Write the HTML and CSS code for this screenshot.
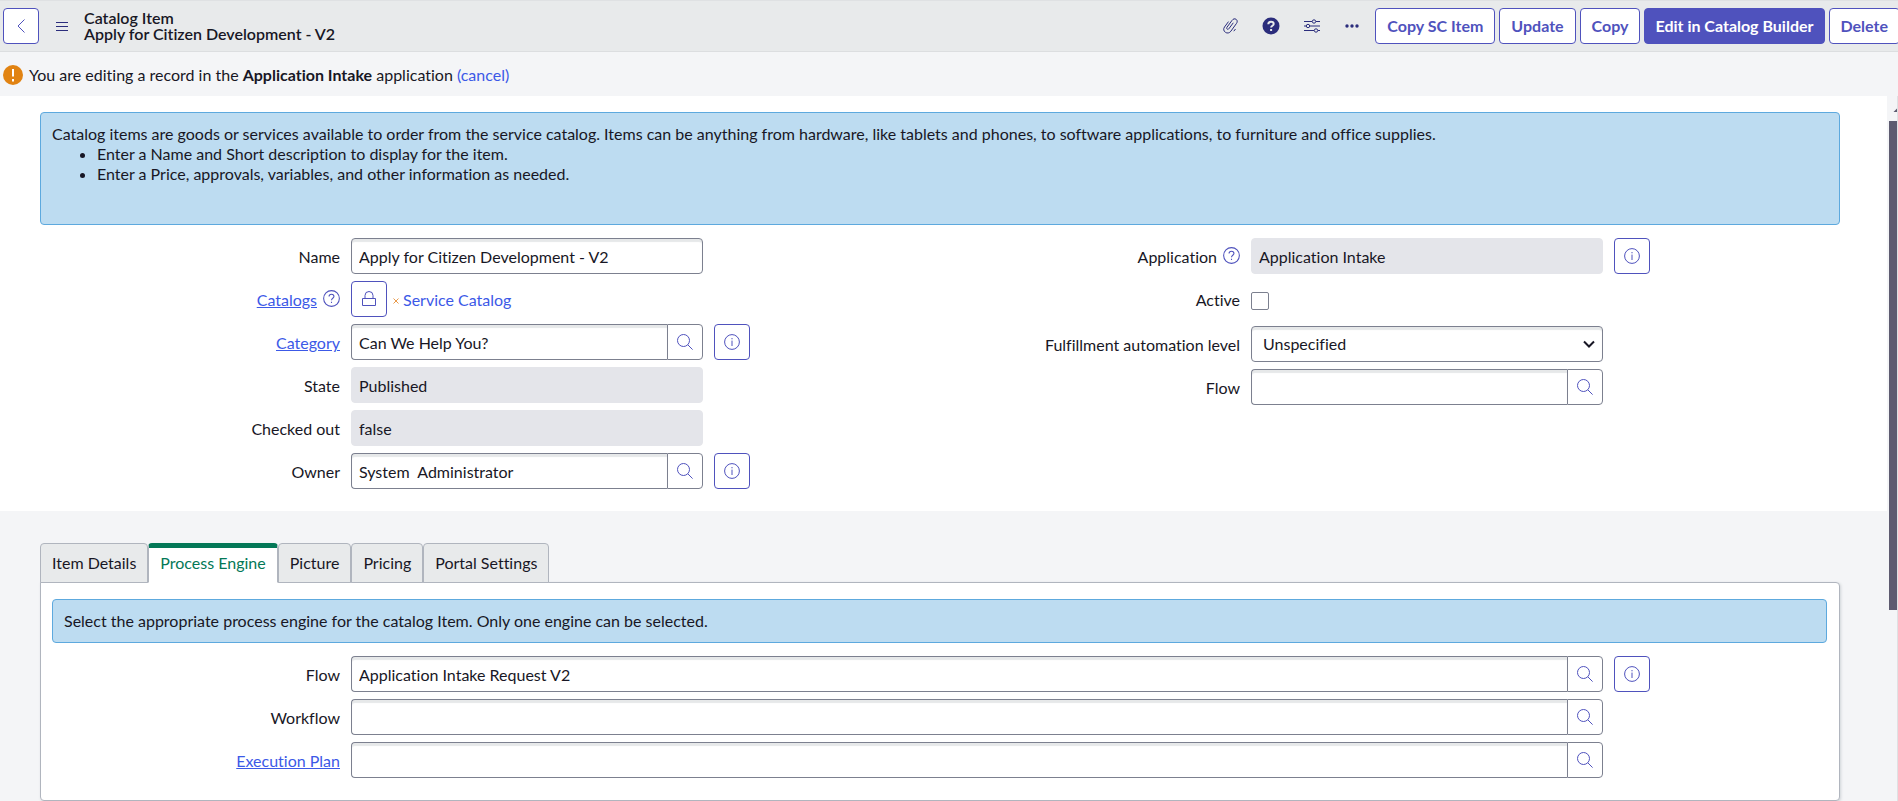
FILE: index.html
```html
<!DOCTYPE html>
<html lang="en">
<head>
<meta charset="utf-8">
<title>Apply for Citizen Development - V2 | Catalog Item</title>
<link rel="stylesheet" href="styles.css">
</head>
<body>
<svg class="sprite" aria-hidden="true">
  <symbol id="i-search" viewBox="0 0 16 16"><circle cx="6.5" cy="6.5" r="6"/><path d="M10.8 10.8 15.6 15.6"/></symbol>
  <symbol id="i-info" viewBox="0 0 16 16"><circle cx="8" cy="8" r="7.4"/><path d="M8 6.6V12M8 4v1.3"/></symbol>
  <symbol id="i-help" viewBox="0 0 16 16"><circle cx="8" cy="8" r="7.4"/><path d="M5.7 6.2C5.7 4.8 6.7 4 8 4s2.3.8 2.3 2.1C10.3 7.7 8 7.8 8 9.6M8 11v1.2"/></symbol>
</svg>
<header class="header">
  <button class="btn btn-icon" aria-label="Back"><svg class="icon" viewBox="0 0 16 16"><path d="M11.5 1.5 5 8 11.5 14.5"/></svg></button>
  <button class="menu" aria-label="Menu"><svg class="icon-menu" viewBox="0 0 12 10"><path d="M0 1.5h12M0 5.5h12M0 9.5h12"/></svg></button>
  <h1 class="title">Catalog Item<br>Apply for Citizen Development - V2</h1>
  <div class="tools">
    <button class="tool" aria-label="Attachments"><svg class="icon" viewBox="0 0 16 16"><path d="M11.3 4.8 6.9 10.7c-.5.7-1.3.8-1.8.4s-.6-1.2-.1-1.9l5.1-6.9C11.2.8 12.8.4 14.1 1.3s1.5 2.6.4 4.1L8.9 13.2c-1.4 1.9-3.7 2.4-5.5 1.1S1.1 10.9 2.5 9L6.5 3.6M13.5 11 11.8 13.2"/></svg></button>
    <button class="tool" aria-label="Help"><svg class="icon-help" viewBox="0 0 18 18"><circle class="disc" cx="9" cy="9" r="8.5"/><path class="mark" d="M6.3 7.2C6.3 5.6 7.4 4.7 9 4.7s2.7.9 2.7 2.3c0 1.8-2.6 1.8-2.6 3.6M9.1 12.1v2"/></svg></button>
    <button class="tool" aria-label="Settings"><svg class="icon" viewBox="0 0 16 16"><path d="M0 3.5h8M12 3.5h4M0 8h2M6 8h10M0 12.5h10M14 12.5h2"/><circle cx="10" cy="3.5" r="1.7"/><circle cx="4" cy="8" r="1.7"/><circle cx="12" cy="12.5" r="1.7"/></svg></button>
    <button class="tool" aria-label="More options"><svg class="icon dots" viewBox="0 0 16 16"><circle cx="3" cy="8" r="1.7"/><circle cx="8" cy="8" r="1.7"/><circle cx="13" cy="8" r="1.7"/></svg></button>
  </div>
  <div class="actions">
    <button class="btn">Copy SC Item</button>
    <button class="btn">Update</button>
    <button class="btn">Copy</button>
    <button class="btn btn-primary">Edit in Catalog Builder</button>
    <button class="btn">Delete</button>
  </div>
</header>
<div class="notice">
  <svg class="alert" viewBox="0 0 20 20"><circle cx="10" cy="10" r="10"/><path d="M10 4v7.5M10 14v2.4"/></svg>
  <p>You are editing a record in the <strong>Application Intake</strong> application <a href="#">(cancel)</a></p>
</div>
<div class="body">
<main class="content">
  <section class="record">
    <div class="callout callout-tall">
      Catalog items are goods or services available to order from the service catalog. Items can be anything from hardware, like tablets and phones, to software applications, to furniture and office supplies.
      <ul>
        <li>Enter a Name and Short description to display for the item.</li>
        <li>Enter a Price, approvals, variables, and other information as needed.</li>
      </ul>
    </div>
    <div class="columns">
      <div class="column">
        <div class="row"><label class="label" for="name">Name</label><input class="field" id="name" value="Apply for Citizen Development - V2"></div>
        <div class="row"><span class="label"><a class="underlined" href="#">Catalogs</a><svg class="icon"><use href="#i-help"/></svg></span>
          <span class="catalogs"><button class="btn btn-icon" aria-label="Unlock Catalogs"><svg class="icon" viewBox="0 0 16 16"><path d="M1.5 7.5h13v7h-13zM4 7.5V4.5a4 4 0 0 1 8 0V7.5"/></svg></button><svg class="cross" viewBox="0 0 6 6"><path d="M.5.5l5 5M5.5.5l-5 5"/></svg><a href="#">Service Catalog</a></span></div>
        <div class="row"><label class="label" for="category"><a class="underlined" href="#">Category</a></label><span class="lookup"><input class="field" id="category" value="Can We Help You?"><button class="search" aria-label="Look up Category"><svg class="icon"><use href="#i-search"/></svg></button></span><button class="btn btn-icon" aria-label="Preview Category"><svg class="icon"><use href="#i-info"/></svg></button></div>
        <div class="row"><label class="label" for="state">State</label><input class="field readonly" id="state" value="Published" readonly></div>
        <div class="row"><label class="label" for="checked">Checked out</label><input class="field readonly" id="checked" value="false" readonly></div>
        <div class="row"><label class="label" for="owner">Owner</label><span class="lookup"><input class="field" id="owner" value="System  Administrator"><button class="search" aria-label="Look up Owner"><svg class="icon"><use href="#i-search"/></svg></button></span><button class="btn btn-icon" aria-label="Preview Owner"><svg class="icon"><use href="#i-info"/></svg></button></div>
      </div>
      <div class="column">
        <div class="row"><label class="label" for="app">Application<svg class="icon"><use href="#i-help"/></svg></label><input class="field readonly" id="app" value="Application Intake" readonly><button class="btn btn-icon" aria-label="Preview Application"><svg class="icon"><use href="#i-info"/></svg></button></div>
        <div class="row row-check"><label class="label" for="active">Active</label><input class="check" type="checkbox" id="active"></div>
        <div class="row"><label class="label" for="level">Fulfillment automation level</label><span class="select"><select class="field" id="level"><option>Unspecified</option></select><svg class="chevron" viewBox="0 0 12 8"><path d="M1 1.5 6 6.5 11 1.5"/></svg></span></div>
        <div class="row"><label class="label" for="flow">Flow</label><span class="lookup"><input class="field" id="flow"><button class="search" aria-label="Look up Flow"><svg class="icon"><use href="#i-search"/></svg></button></span></div>
      </div>
    </div>
  </section>
  <section class="sections">
    <div class="tabs" role="tablist">
      <button class="tab" role="tab">Item Details</button>
      <button class="tab tab-active" role="tab" aria-selected="true">Process Engine</button>
      <button class="tab" role="tab">Picture</button>
      <button class="tab" role="tab">Pricing</button>
      <button class="tab" role="tab">Portal Settings</button>
    </div>
    <div class="panel" role="tabpanel">
      <div class="callout">Select the appropriate process engine for the catalog Item. Only one engine can be selected.</div>
      <div class="wide">
        <div class="row"><label class="label" for="pflow">Flow</label><span class="lookup"><input class="field" id="pflow" value="Application Intake Request V2"><button class="search" aria-label="Look up process Flow"><svg class="icon"><use href="#i-search"/></svg></button></span><button class="btn btn-icon" aria-label="Preview Flow"><svg class="icon"><use href="#i-info"/></svg></button></div>
        <div class="row"><label class="label" for="workflow">Workflow</label><span class="lookup"><input class="field" id="workflow"><button class="search" aria-label="Look up Workflow"><svg class="icon"><use href="#i-search"/></svg></button></span></div>
        <div class="row"><label class="label" for="plan"><a class="underlined" href="#">Execution Plan</a></label><span class="lookup"><input class="field" id="plan"><button class="search" aria-label="Look up Execution Plan"><svg class="icon"><use href="#i-search"/></svg></button></span></div>
      </div>
    </div>
  </section>
</main>
<div class="scrollbar" aria-hidden="true"><svg class="up" viewBox="0 0 8 8"><path d="M8 1v7H1z"/></svg><div class="thumb"></div></div>
</div>
</body>
</html>
```
FILE: styles.css
```css
* { box-sizing: border-box; }
body {
  margin: 0;
  height: 100vh;
  overflow: hidden;
  display: flex;
  flex-direction: column;
  background: #f4f5f7;
  color: #181725;
  font: 16px/20px Lato, "Open Sans", sans-serif;
  font-variant-ligatures: none;
}
button, input, select { font: inherit; font-variant-ligatures: none; color: inherit; margin: 0; }
p, h1, ul { margin: 0; }
a { color: #3c59e7; text-decoration: none; }
.underlined { text-decoration: underline; }
.sprite { position: absolute; width: 0; height: 0; }
.icon { width: 16px; height: 16px; flex: none; fill: none; stroke: #4f52bd; }

.header {
  flex: none;
  display: flex;
  align-items: center;
  height: 52px;
  padding-left: 3px;
  background: #e8eaeb;
  border-top: 1px solid #dfe1e3;
  border-bottom: 1px solid #dcdee0;
}
.btn {
  flex: none;
  height: 36px;
  padding: 0 11px;
  border: 1px solid #4f52bd;
  border-radius: 4px;
  background: #fff;
  color: #4f52bd;
  font-weight: 700;
  white-space: nowrap;
}
.btn-primary { padding: 0 10px; background: #4f52bd; color: #fff; }
.btn-icon { width: 36px; padding: 0; display: flex; align-items: center; justify-content: center; }
.menu, .tool { padding: 0; border: 0; background: none; display: flex; }
.menu { margin: 0 16px 0 17px; }
.icon-menu { width: 12px; height: 10px; stroke: #2b2d7c; }
.title { font-size: 16px; line-height: 16px; font-weight: 600; white-space: nowrap; }
.tools { display: flex; align-items: center; gap: 24px; margin-left: auto; margin-right: 15px; }
.tools .icon { stroke: #2b2d7c; }
.tools .dots { fill: #2b2d7c; stroke: none; }
.icon-help { width: 18px; height: 18px; }
.disc { fill: #2b2d7c; }
.mark { fill: none; stroke: #e8eaeb; stroke-width: 2; }
.actions { display: flex; gap: 4px; margin-right: -2px; }

.notice { flex: none; display: flex; align-items: center; gap: 6px; height: 44px; padding: 2px 3px 0; }
.alert { width: 20px; height: 20px; fill: #e18312; }
.alert path { stroke: #fff; stroke-width: 2; }

.body { flex: 1; min-height: 0; display: flex; }
.content { flex: 1; min-width: 0; overflow: hidden; }
.record { background: #fff; padding: 16px 47px 22px 40px; }
.callout {
  padding: 11px;
  border: 1px solid #5da9de;
  border-radius: 4px;
  background: #bddcf1;
}
.callout-tall { min-height: 113px; }
.callout ul { padding-left: 45px; }
.columns { display: grid; grid-template-columns: 1fr 1fr; padding-top: 13px; }
.column, .wide { display: flex; flex-direction: column; gap: 7px; }
.row { display: flex; gap: 11px; min-height: 36px; }
.column .row { padding-right: 237px; }
.row .btn-icon { margin-right: -47px; }
.label {
  flex: none;
  width: 300px;
  padding-top: 9px;
  display: flex;
  justify-content: flex-end;
  gap: 6px;
}
.label .icon { width: 17px; height: 17px; }
.field {
  flex: 1;
  min-width: 0;
  width: 100%;
  height: 36px;
  padding: 0 7px;
  border: 1px solid #7c808f;
  border-radius: 4px;
  background: #fff;
  box-shadow: inset 0 3px 1px #e6e8e9;
}
.readonly { border-color: #e4e5ea; background: #e4e5ea; box-shadow: none; }
.lookup, .select { flex: 1; min-width: 0; display: flex; position: relative; }
.lookup .field { border-radius: 4px 0 0 4px; border-right: 0; }
.search {
  flex: none;
  width: 36px;
  height: 36px;
  padding: 0;
  display: flex;
  align-items: center;
  justify-content: center;
  border: 1px solid #7c808f;
  border-radius: 0 4px 4px 0;
  background: #fff;
}
.select .field { appearance: none; padding: 0 11px; }
.chevron { position: absolute; right: 8px; top: 14px; width: 12px; height: 8px; fill: none; stroke: #181725; stroke-width: 2; }
.catalogs { display: flex; align-items: center; }
.row .catalogs .btn-icon { margin-right: 6px; }
.catalogs a { padding-top: 2px; }
.cross { width: 6px; height: 6px; margin-top: 4px; margin-right: 4px; stroke: #e89a4c; }
.row-check { min-height: 38px; }
.check {
  appearance: none;
  width: 18px;
  height: 18px;
  margin-top: 11px;
  border: 1px solid #7c808f;
  border-radius: 2px;
  background: #fff;
}

.sections { padding: 32px 47px 0 40px; }
.tabs { display: flex; }
.tab {
  height: 40px;
  padding: 0 11px;
  margin-bottom: -1px;
  border: 1px solid #b0b5be;
  border-radius: 4px 4px 0 0;
  background: #e8eaeb;
}
.tab-active {
  position: relative;
  padding-bottom: 4px;
  background: #fff;
  color: #047857;
  border-top: 5px solid #047857;
  border-bottom-color: #fff;
}
.panel {
  padding: 16px 12px 22px 11px;
  border: 1px solid #b0b5be;
  border-radius: 0 4px 4px 4px;
  background: #fff;
  box-shadow: 1px 1px 3px #d0d4d8;
}
.wide { padding-top: 13px; }
.wide .label { width: 288px; }
.wide .row { padding-right: 224px; }

.scrollbar {
  flex: none;
  width: 11px;
  padding-top: 12px;
  border-right: 1px solid #dfe1e3;
  display: flex;
  flex-direction: column;
  align-items: flex-end;
  gap: 9px;
}
.up { width: 4px; height: 4px; fill: #5d5b70; }
.thumb { width: 8px; height: 489px; background: #5d5b70; }
```
